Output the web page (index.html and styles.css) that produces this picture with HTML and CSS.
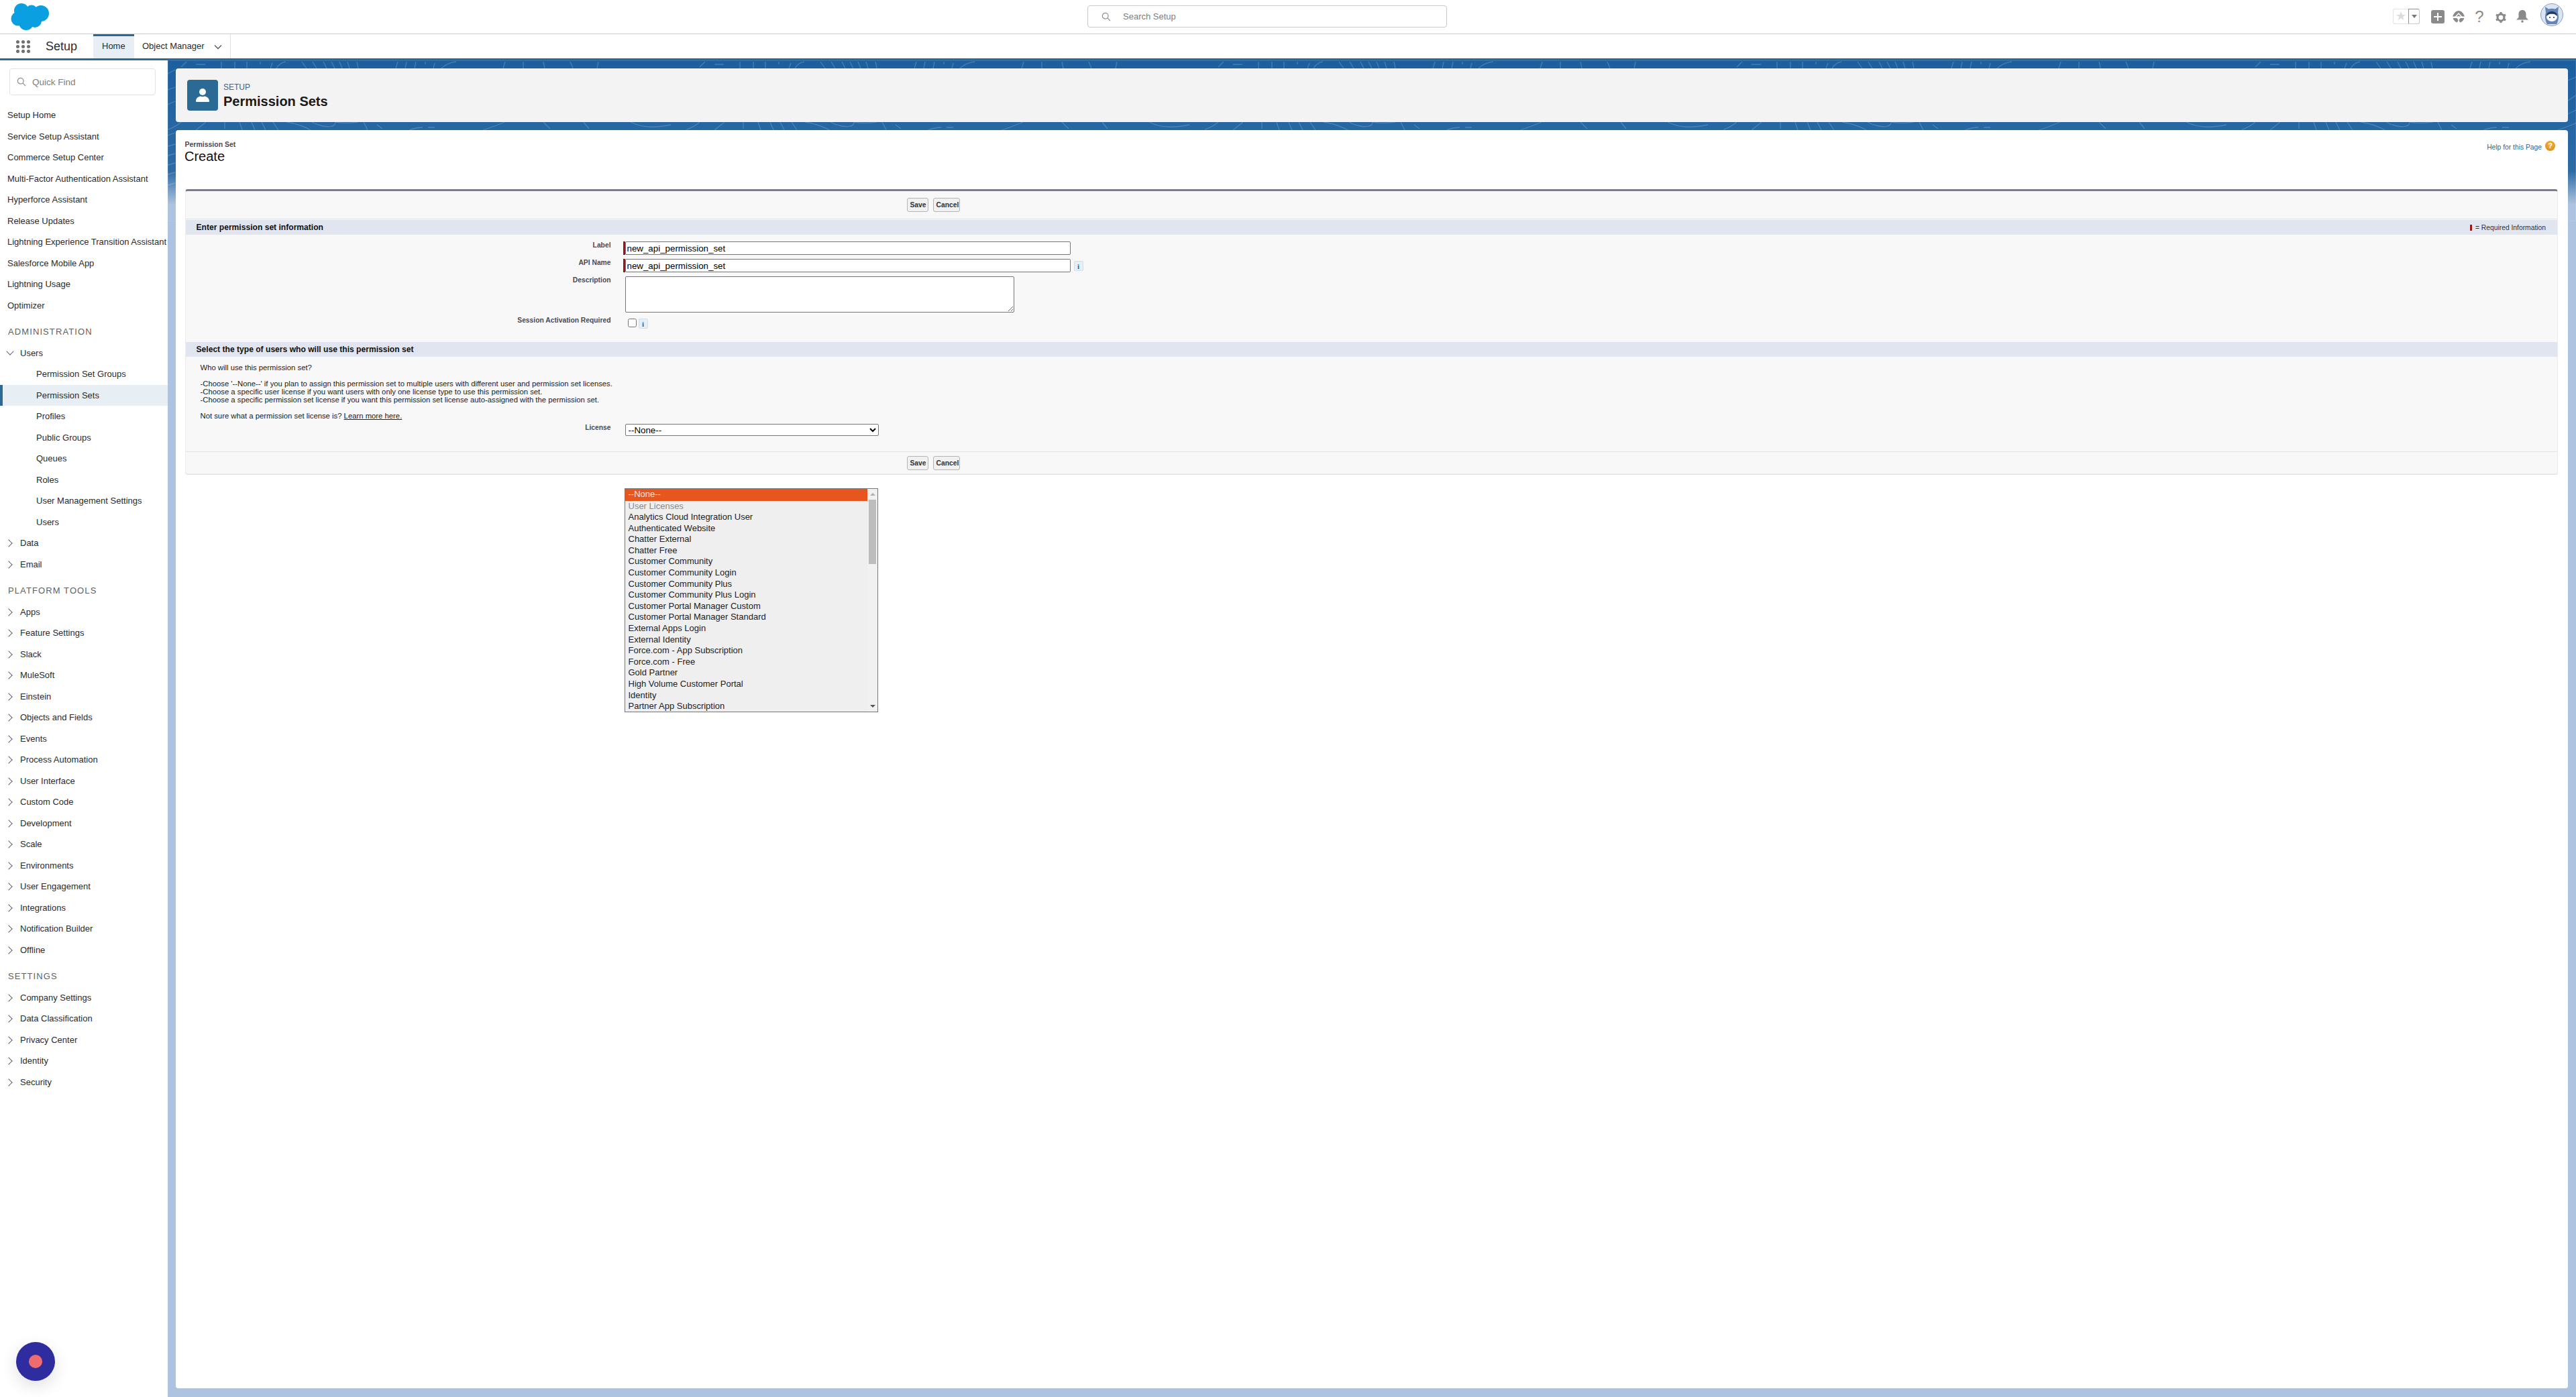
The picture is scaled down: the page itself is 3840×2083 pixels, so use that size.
FILE: index.html
```html
<!DOCTYPE html>
<html lang="en">

<head>
    <meta charset="UTF-8">
    <title>Permission Sets | Salesforce</title>
    <link rel="stylesheet" href="styles.css">
</head>

<body>
    <header class="topBar">
        <svg class="logo" viewBox="0 0 57 40">
            <g fill="#0a9fe0">
                <circle cx="16" cy="11" r="11"/>
                <circle cx="31" cy="11" r="8.5"/>
                <circle cx="45" cy="15" r="12"/>
                <circle cx="11" cy="23" r="10.5"/>
                <circle cx="23" cy="29" r="11"/>
                <circle cx="36" cy="26" r="10"/>
                <rect x="12" y="10" width="32" height="18"/>
            </g>
        </svg>
        <div class="globalSearch">
            <svg class="searchIcon" viewBox="0 0 16 16"><circle cx="6.5" cy="6.5" r="5"/><path d="M10.2 10.2l4.6 4.8"/></svg>
            <span>Search Setup</span>
        </div>
        <div class="globalActions">
            <div class="favorites">
                <span class="favStar">★</span>
                <span class="favMenu"><i></i></span>
            </div>
            <svg class="actionIcon plusIcon" viewBox="0 0 20 20"><rect width="20" height="20" rx="3" fill="#8a8a8a"/><path d="M10 4v12M4 10h12" stroke="#fff" stroke-width="2" fill="none"/></svg>
            <svg class="actionIcon trailIcon" viewBox="0 0 20 20" fill="#8a8a8a"><path d="M10 1c4 0 7 3.500 9 8.500H1C3 4.500 6 1 10 1z"/><path d="M1.500 12h6l2 3-1.500 3.500C5 18 3 15.500 1.500 12zM18.500 12h-6l-2 3 1.500 3.500c3-.5 5-3 6.500-6.500z"/><path d="M5 10.500L10 5l5 5.500M10 9v3" stroke="#fff" stroke-width="1.400" fill="none"/></svg>
            <span class="helpGlyph">?</span>
            <svg class="actionIcon gearIcon" viewBox="0 0 20 20"><circle cx="10" cy="10" r="5.500" fill="none" stroke="#8a8a8a" stroke-width="3.500"/><path d="M10 1v4M10 15v4M2.200 5.500l3.500 2M14.300 12.500l3.500 2M2.200 14.500l3.500-2M14.300 7.500l3.500-2" stroke="#8a8a8a" stroke-width="3.500"/></svg>
            <svg class="actionIcon bellIcon" viewBox="0 0 20 20" fill="#8a8a8a"><path d="M10 1c3.500 0 5.500 2.500 5.500 6v5l3.500 3.500H1L4.500 12V7C4.500 3.500 6.500 1 10 1z"/><circle cx="10" cy="18" r="1.800"/></svg>
            <svg class="avatar" viewBox="0 0 34 34">
                <circle cx="17" cy="17" r="16.500" fill="#dbe4f3" stroke="#8b9cc0"/>
                <path d="M8 14L7 5l5 3.500c3-1 7-1 10 0L27 5l-1 9c2 6 1 12-2 17H10C7 26 6 20 8 14z" fill="#6484b8"/>
                <ellipse cx="17" cy="20" rx="8" ry="7" fill="#fff"/>
                <path d="M9 19c0-5 4-7 8-7s8 2 8 7c-3-3-6-4-8-3-2-1-5 0-8 3z" fill="#1f3b66"/>
                <circle cx="14" cy="21" r="1.100" fill="#1f3b66"/>
                <circle cx="20" cy="21" r="1.100" fill="#1f3b66"/>
            </svg>
        </div>
    </header>

    <nav class="appBar">
        <div class="waffle">
            <i></i><i></i><i></i><i></i><i></i><i></i><i></i><i></i><i></i>
        </div>
        <span class="appName">Setup</span>
        <a class="navTab active">Home</a>
        <a class="navTab menuTab">Object Manager
            <svg class="chevron" viewBox="0 0 12 8"><path d="M1 1.500l5 5 5-5"/></svg>
        </a>
    </nav>

    <div class="pageBody">
        <aside class="sidebar">
            <div class="quickFind">
                <svg class="searchIcon" viewBox="0 0 16 16"><circle cx="6.500" cy="6.500" r="5"/><path d="M10.200 10.200l4.600 4.800"/></svg>
                <span>Quick Find</span>
            </div>
            <ul class="treeList">
                <li>Setup Home</li>
                <li>Service Setup Assistant</li>
                <li>Commerce Setup Center</li>
                <li>Multi-Factor Authentication Assistant</li>
                <li>Hyperforce Assistant</li>
                <li>Release Updates</li>
                <li>Lightning Experience Transition Assistant</li>
                <li>Salesforce Mobile App</li>
                <li>Lightning Usage</li>
                <li>Optimizer</li>
            </ul>
            <h3 class="treeTitle">Administration</h3>
            <ul class="treeList">
                <li class="branch open">Users</li>
                <li class="leaf">Permission Set Groups</li>
                <li class="leaf current">Permission Sets</li>
                <li class="leaf">Profiles</li>
                <li class="leaf">Public Groups</li>
                <li class="leaf">Queues</li>
                <li class="leaf">Roles</li>
                <li class="leaf">User Management Settings</li>
                <li class="leaf">Users</li>
                <li class="branch">Data</li>
                <li class="branch">Email</li>
            </ul>
            <h3 class="treeTitle">Platform Tools</h3>
            <ul class="treeList">
                <li class="branch">Apps</li>
                <li class="branch">Feature Settings</li>
                <li class="branch">Slack</li>
                <li class="branch">MuleSoft</li>
                <li class="branch">Einstein</li>
                <li class="branch">Objects and Fields</li>
                <li class="branch">Events</li>
                <li class="branch">Process Automation</li>
                <li class="branch">User Interface</li>
                <li class="branch">Custom Code</li>
                <li class="branch">Development</li>
                <li class="branch">Scale</li>
                <li class="branch">Environments</li>
                <li class="branch">User Engagement</li>
                <li class="branch">Integrations</li>
                <li class="branch">Notification Builder</li>
                <li class="branch">Offline</li>
            </ul>
            <h3 class="treeTitle">Settings</h3>
            <ul class="treeList">
                <li class="branch">Company Settings</li>
                <li class="branch">Data Classification</li>
                <li class="branch">Privacy Center</li>
                <li class="branch">Identity</li>
                <li class="branch">Security</li>
            </ul>
        </aside>

        <main class="content">
            <svg class="bandArt" width="100%" height="240">
                <defs>
                    <pattern id="bandLines" width="773" height="240" patternUnits="userSpaceOnUse">
                        <!-- strip above the page header -->
                        <path d="M20 10l8-8M42 6h14M80 2v10M100 2v10M118 2v10M138 2v4M156 4l-3 8M162 12c3-5 7-9 14-10M200 2l7 10M216 2l6 10M232 2l5 10M244 2l5 10M256 2l4 10M268 2l3 10M282 2l2 10M340 12l3-10M354 12l2-10M368 12l2-10M384 2v4M396 12l2-8M408 12c6-6 12-9 22-10M500 12l3-10M530 2v10M560 2l2 10M600 2l4 10M640 12l2-10"/>
                        <!-- strip below the page header -->
                        <path d="M-3 104c8-2 16-6 23-12M42 104l15-12M85 92v10M107 92l4 12M125 92l5 12M140 92l6 12M157 92l8 12M177 92c14 2 30 8 40 14M215 92c10 6 24 8 30 6 4-1 5-4 5-6M250 92c10 2 20 2 34 0M292 92l6 12M312 96l8 6M360 104c8-3 14-4 20-4M388 100h10M470 104c10-3 20-7 32-12M560 92l10 10M620 92l8 10M690 92c20 10 40 8 60 4"/>
                        <!-- streaks showing at the side margins -->
                        <path d="M0 20l11-6M0 44l11-4M0 66l11-5M0 112l11-4M0 128l11-3M0 142l11-3M0 156l11-3M0 170l11-3M0 186l11-3M486 30l12-5M486 60l12-8M486 80l12-6"/>
                    </pattern>
                </defs>
                <rect width="100%" height="240" fill="url(#bandLines)"/>
            </svg>

            <section class="pageHeader">
                <div class="headerIcon">
                    <svg viewBox="0 0 24 24" fill="#fff"><circle cx="12" cy="7" r="5"/><path d="M2 21c0-5 4-7 7-7.500 1.800 1 4.200 1 6 0 3 .5 7 2.500 7 7.500 0 .8-.6 1-1.200 1H3.200C2.600 22 2 21.800 2 21z"/></svg>
                </div>
                <div>
                    <div class="eyebrow">SETUP</div>
                    <h1 class="pageTitle">Permission Sets</h1>
                </div>
            </section>

            <section class="mainPanel">
                <div class="titleRow">
                    <div>
                        <div class="typeName">Permission Set</div>
                        <h2 class="recordName">Create</h2>
                    </div>
                    <a class="helpLink">Help for this Page <span class="helpOrb">?</span></a>
                </div>

                <div class="formBlock">
                    <div class="buttonRow topButtons">
                        <button>Save</button>
                        <button>Cancel</button>
                    </div>

                    <div class="sectionHead">
                        <span>Enter permission set information</span>
                        <span class="requiredKey"><i></i> = Required Information</span>
                    </div>
                    <div class="fields firstFields">
                        <div class="fieldRow">
                            <label>Label</label>
                            <div class="fieldValue required"><input type="text" value="new_api_permission_set"></div>
                        </div>
                        <div class="fieldRow">
                            <label>API Name</label>
                            <div class="fieldValue required"><input type="text" value="new_api_permission_set"><span class="infoTip">i</span></div>
                        </div>
                        <div class="fieldRow">
                            <label>Description</label>
                            <div class="fieldValue"><textarea></textarea></div>
                        </div>
                        <div class="fieldRow sessionRow">
                            <label>Session Activation Required</label>
                            <div class="fieldValue"><input type="checkbox"><span class="infoTip">i</span></div>
                        </div>
                    </div>

                    <div class="sectionHead">
                        <span>Select the type of users who will use this permission set</span>
                    </div>
                    <div class="helpText">
                        <p>Who will use this permission set?</p>
                        <p>-Choose '--None--' if you plan to assign this permission set to multiple users with different user and permission set licenses.<br>
                            -Choose a specific user license if you want users with only one license type to use this permission set.<br>
                            -Choose a specific permission set license if you want this permission set license auto-assigned with the permission set.</p>
                        <p>Not sure what a permission set license is? <a>Learn more here.</a></p>
                    </div>
                    <div class="fieldRow licenseRow">
                        <label>License</label>
                        <div class="fieldValue"><select><option>--None--</option></select></div>
                    </div>

                    <div class="buttonRow bottomButtons">
                        <button>Save</button>
                        <button>Cancel</button>
                    </div>
                </div>

                <div class="listBox">
                    <ul class="listOptions">
                        <li class="selected">--None--</li>
                        <li class="groupName">User Licenses</li>
                        <li>Analytics Cloud Integration User</li>
                        <li>Authenticated Website</li>
                        <li>Chatter External</li>
                        <li>Chatter Free</li>
                        <li>Customer Community</li>
                        <li>Customer Community Login</li>
                        <li>Customer Community Plus</li>
                        <li>Customer Community Plus Login</li>
                        <li>Customer Portal Manager Custom</li>
                        <li>Customer Portal Manager Standard</li>
                        <li>External Apps Login</li>
                        <li>External Identity</li>
                        <li>Force.com - App Subscription</li>
                        <li>Force.com - Free</li>
                        <li>Gold Partner</li>
                        <li>High Volume Customer Portal</li>
                        <li>Identity</li>
                        <li>Partner App Subscription</li>
                    </ul>
                    <div class="listScroll">
                        <i class="arrowUp"></i>
                        <div class="scrollTrack"><div class="scrollThumb"></div></div>
                        <i class="arrowDown"></i>
                    </div>
                </div>
            </section>
        </main>
    </div>

    <div class="chatBubble"><span></span></div>
</body>

</html>
```

FILE: styles.css
```css
* {
    margin: 0;
    padding: 0;
    box-sizing: border-box;
}

body {
    width: 3840px;
    height: 2083px;
    overflow: hidden;
    display: flex;
    flex-direction: column;
    font-family: "Liberation Sans", Arial, sans-serif;
    font-size: 13px;
    color: #2b2b2b;
    background-color: #fff;
}

ul {
    list-style: none;
}

/* global header */
.topBar {
    height: 51px;
    flex: none;
    position: relative;
    display: flex;
    align-items: center;
    justify-content: center;
    border-bottom: 1px solid #cfcfcf;
}

.logo {
    position: absolute;
    left: 16px;
    top: 5px;
    width: 57px;
    height: 40px;
}

.globalSearch {
    width: 536px;
    height: 33px;
    margin-top: -1px;
    margin-right: 62px;
    display: flex;
    align-items: center;
    padding-left: 20px;
    gap: 18px;
    border: 1px solid #c9c9c9;
    border-radius: 4px;
    color: #7d7d7d;
}

.searchIcon {
    width: 14px;
    height: 14px;
    fill: none;
    stroke: #8f8f8f;
    stroke-width: 1.4;
}

.globalActions {
    position: absolute;
    right: 19px;
    top: 5px;
    display: flex;
    align-items: flex-start;
}

.favorites {
    display: flex;
    height: 23px;
    margin: 8px 17px 0 0;
}

.favStar {
    width: 23px;
    text-align: center;
    line-height: 21px;
    font-size: 18px;
    color: #dcdcdc;
    border: 1px solid #e4e4e4;
    border-right: none;
    border-radius: 3px 0 0 3px;
}

.favMenu {
    width: 17px;
    display: flex;
    align-items: center;
    justify-content: center;
    border: 1px solid #8f8f8f;
    border-color: #8f8f8f #c9c9c9 #c9c9c9 #8f8f8f;
    border-radius: 0 3px 3px 0;
}

.favMenu i {
    border: 4px solid transparent;
    border-top: 5px solid #777;
    border-bottom: none;
}

.actionIcon {
    width: 20px;
    height: 20px;
    margin-top: 10px;
}

.trailIcon {
    margin-left: 11px;
}

.helpGlyph {
    width: 16px;
    margin: 8px 15px 0 13px;
    text-align: center;
    font-size: 24px;
    line-height: 24px;
    color: #8a8a8a;
}

.gearIcon {
    width: 18px;
    height: 18px;
    margin-top: 12px;
}

.bellIcon {
    margin: 9px 17px 0 13px;
}

.avatar {
    width: 34px;
    height: 34px;
}

/* app navigation */
.appBar {
    height: 36px;
    flex: none;
    display: flex;
    align-items: stretch;
}

.waffle {
    width: 21px;
    height: 19px;
    margin: 9px 0 0 24px;
    display: grid;
    grid-template-columns: repeat(3, 5px);
    grid-auto-rows: 5px;
    gap: 2px 3px;
}

.waffle i {
    background-color: #6f6f6f;
    border-radius: 50%;
}

.appName {
    width: 71px;
    margin-left: 23px;
    font-size: 18px;
    line-height: 36px;
}

.navTab {
    padding: 0 12px;
    line-height: 34px;
    border-top: 3px solid transparent;
}

.navTab.active {
    width: 61px;
    padding: 0 13px;
    background-color: #e8eff4;
    border-top-color: #2a6a94;
    line-height: 30px;
}

.menuTab {
    display: flex;
    align-items: center;
    gap: 14px;
    width: 144px;
    border-top: none;
    border-right: 1px solid #e0e0e0;
}

.chevron {
    width: 12px;
    height: 8px;
    margin-top: 2px;
    fill: none;
    stroke: #555;
    stroke-width: 1.3;
}

/* sidebar and page */
.pageBody {
    flex: 1;
    display: flex;
    min-height: 0;
    border-top: 3px solid #2a6a94;
}

.sidebar {
    width: 250px;
    flex: none;
    background-color: #fff;
}

.quickFind {
    height: 40px;
    margin: 12px 18px 14px 14px;
    display: flex;
    align-items: center;
    gap: 9px;
    padding-left: 10px;
    border: 1px solid #e3e3e3;
    border-radius: 4px;
    color: #7d7d7d;
    font-size: 13.5px;
}

.treeList li {
    height: 31.5px;
    line-height: 31.5px;
    padding-left: 11px;
    white-space: nowrap;
}

.treeList .branch {
    position: relative;
    padding-left: 30px;
}

.treeList .branch::before {
    content: "";
    position: absolute;
    left: 9px;
    top: 12px;
    width: 7px;
    height: 7px;
    border-top: 1.4px solid #666;
    border-right: 1.4px solid #666;
    transform: rotate(45deg);
}

.treeList .branch.open::before {
    left: 11px;
    top: 9px;
    transform: rotate(135deg);
}

.treeList .leaf {
    padding-left: 54px;
}

.treeList .current {
    background-color: #e8eff4;
    border-left: 4px solid #2a6a94;
    padding-left: 50px;
}

.treeTitle {
    height: 31.5px;
    margin-top: 8px;
    padding-left: 12px;
    line-height: 31.5px;
    font-size: 13px;
    font-weight: normal;
    letter-spacing: 1.1px;
    text-transform: uppercase;
    color: #5f5f5f;
}

.content {
    flex: 1;
    min-width: 0;
    position: relative;
    padding: 12px 12px 13px;
    display: flex;
    flex-direction: column;
    gap: 12px;
    background: linear-gradient(#1c5f9f 0, #2c6ba6 165px, #aec3df 215px);
}

.bandArt {
    position: absolute;
    left: 0;
    top: 0;
    fill: none;
    stroke: rgba(255, 255, 255, .18);
    stroke-width: 1.3;
}

.pageHeader {
    position: relative;
    height: 80px;
    flex: none;
    display: flex;
    align-items: center;
    gap: 8px;
    padding-left: 17px;
    background-color: #f3f3f3;
    border-radius: 4px;
}

.headerIcon {
    width: 46px;
    height: 46px;
    display: flex;
    align-items: center;
    justify-content: center;
    background-color: #2a6a94;
    border-radius: 4px;
}

.headerIcon svg {
    width: 24px;
    height: 24px;
}

.eyebrow {
    margin-top: 2px;
    font-size: 12px;
    line-height: 14px;
    color: #2a6a94;
}

.pageTitle {
    margin-top: 1px;
    font-size: 20px;
    line-height: 26px;
    color: #1a1a1a;
}

.mainPanel {
    position: relative;
    flex: 1;
    padding: 15px 15px 0 13.5px;
    background-color: #fff;
    border-radius: 4px;
}

.titleRow {
    height: 73px;
    display: flex;
    justify-content: space-between;
}

.typeName {
    font-size: 10.5px;
    font-weight: bold;
    line-height: 13px;
    color: #4a4a56;
}

.recordName {
    margin-left: -.5px;
    font-size: 20px;
    font-weight: normal;
    line-height: 22px;
    color: #111;
}

.helpLink {
    display: flex;
    align-items: flex-start;
    gap: 5px;
    margin-right: 4px;
    font-size: 10.3px;
    line-height: 21px;
    color: #2a6a94;
}

.helpOrb {
    width: 15px;
    height: 15px;
    margin-top: 1px;
    text-align: center;
    font-size: 11px;
    font-weight: bold;
    line-height: 15px;
    color: #fff;
    border-radius: 50%;
    background: radial-gradient(circle at 50% 35%, #f6b73c, #d9800f);
}

/* form */
.formBlock {
    height: 425px;
    display: flex;
    flex-direction: column;
    background-color: #f8f8f8;
    border: 1px solid #ececec;
    border-top: 3px solid #7b7b8c;
    border-radius: 4px;
    box-shadow: 0 1px 0 #e4e4e4;
}

.buttonRow {
    display: flex;
    justify-content: flex-start;
    gap: 7px;
    padding-left: 1075px;
}

.topButtons {
    height: 42px;
    padding-top: 10px;
    border-bottom: 1px solid #e3e3e3;
}

.bottomButtons {
    margin-top: auto;
    height: 33px;
    padding-top: 6px;
    border-top: 1px solid #e3e3e3;
}

.buttonRow button {
    height: 21px;
    padding: 0 4px;
    font-family: inherit;
    font-size: 10.3px;
    font-weight: bold;
    color: #333;
    background-color: #f1f1f1;
    border: 1px solid #b5b5b5;
    border-radius: 3px;
}

.buttonRow button:first-child {
    width: 32px;
}

.buttonRow button:last-child {
    width: 40px;
}

.sectionHead {
    height: 22px;
    margin-top: 1px;
    flex: none;
    display: flex;
    justify-content: space-between;
    align-items: center;
    padding: 0 17px 0 16px;
    font-size: 12.1px;
    font-weight: bold;
    color: #111;
    background-color: #e1e5ef;
}

.requiredKey {
    display: flex;
    align-items: center;
    gap: 5px;
    font-size: 10.3px;
    font-weight: normal;
    color: #333;
}

.requiredKey i {
    width: 3px;
    height: 9px;
    background-color: #a31515;
}

.fields {
    padding-top: 10px;
    height: 159px;
}

.fieldRow {
    display: flex;
    margin-bottom: 6px;
}

.fieldRow label {
    width: 634px;
    flex: none;
    text-align: right;
    font-size: 10.3px;
    font-weight: bold;
    line-height: 11px;
    color: #4a4a56;
}

.fieldValue {
    position: relative;
    display: flex;
    margin-left: 21px;
}

.required::before {
    content: "";
    position: absolute;
    left: -3px;
    top: 0;
    bottom: 0;
    width: 3px;
    background-color: #a31515;
}

.fieldValue input[type="text"] {
    width: 664px;
    height: 20px;
    padding: 0 2px;
    font-family: inherit;
    font-size: 13.33px;
    border: 1px solid #767676;
    border-radius: 2px;
}

.fieldValue textarea {
    display: block;
    width: 580px;
    height: 54px;
    border: 1px solid #767676;
    border-radius: 2px;
}

.fieldValue select {
    width: 378px;
    height: 18px;
    font-family: inherit;
    font-size: 13.33px;
    background-color: #fff;
    border: 1px solid #767676;
    border-radius: 2px;
}

.fieldValue input[type="checkbox"] {
    width: 13px;
    height: 13px;
    margin: 3px 3px 0 4px;
}

.infoTip {
    width: 14px;
    height: 15px;
    margin: 3px 0 0 5px;
    text-align: center;
    font-family: "Liberation Serif", serif;
    font-size: 11px;
    font-weight: bold;
    line-height: 15px;
    color: #2a6a94;
    background-color: #e6eef6;
    border: 1px solid #d5dde6;
    border-radius: 2px;
}

.sessionRow .infoTip {
    margin-left: 0;
}

.helpText {
    padding: 10px 22px 0;
    font-size: 11.3px;
    line-height: 12px;
    color: #222;
}

.helpText p {
    margin-bottom: 12px;
}

.helpText a {
    text-decoration: underline;
}

.licenseRow {
    margin-top: -6px;
}

/* expanded license list */
.listBox {
    width: 378px;
    height: 334px;
    margin: 21px 0 0 655.5px;
    display: flex;
    background-color: #efefef;
    border: 1px solid #767676;
}

.listOptions {
    flex: 1;
    font-size: 13px;
    color: #222;
}

.listOptions li {
    height: 16.6px;
    line-height: 16.6px;
    padding-left: 4.500px;
    white-space: nowrap;
}

.listOptions .selected {
    background-color: #e8561f;
    color: #f3e7df;
    height: 17.5px;
}

.listOptions .groupName {
    color: #8a8a8a;
}

.listScroll {
    width: 15px;
    display: flex;
    flex-direction: column;
    align-items: center;
    background-color: #f1f1f1;
}

.scrollTrack {
    flex: 1;
    width: 100%;
}

.scrollThumb {
    height: 96px;
    margin: 0 2px;
    background-color: #bdbdbd;
}

.arrowUp,
.arrowDown {
    flex: none;
    margin: 6px 0;
    border: 4px solid transparent;
}

.arrowUp {
    border-bottom: 4px solid #b0b0b0;
    border-top: none;
}

.arrowDown {
    border-top: 4px solid #555;
    border-bottom: none;
}

.chatBubble {
    position: absolute;
    left: 24px;
    top: 2001px;
    width: 58px;
    height: 58px;
    display: flex;
    align-items: center;
    justify-content: center;
    background-color: #2f2ca0;
    border-radius: 50%;
    box-shadow: 0 8px 24px rgba(0, 0, 0, .12);
}

.chatBubble span {
    width: 20px;
    height: 20px;
    background-color: #ee6b6e;
    border-radius: 50%;
}
```
